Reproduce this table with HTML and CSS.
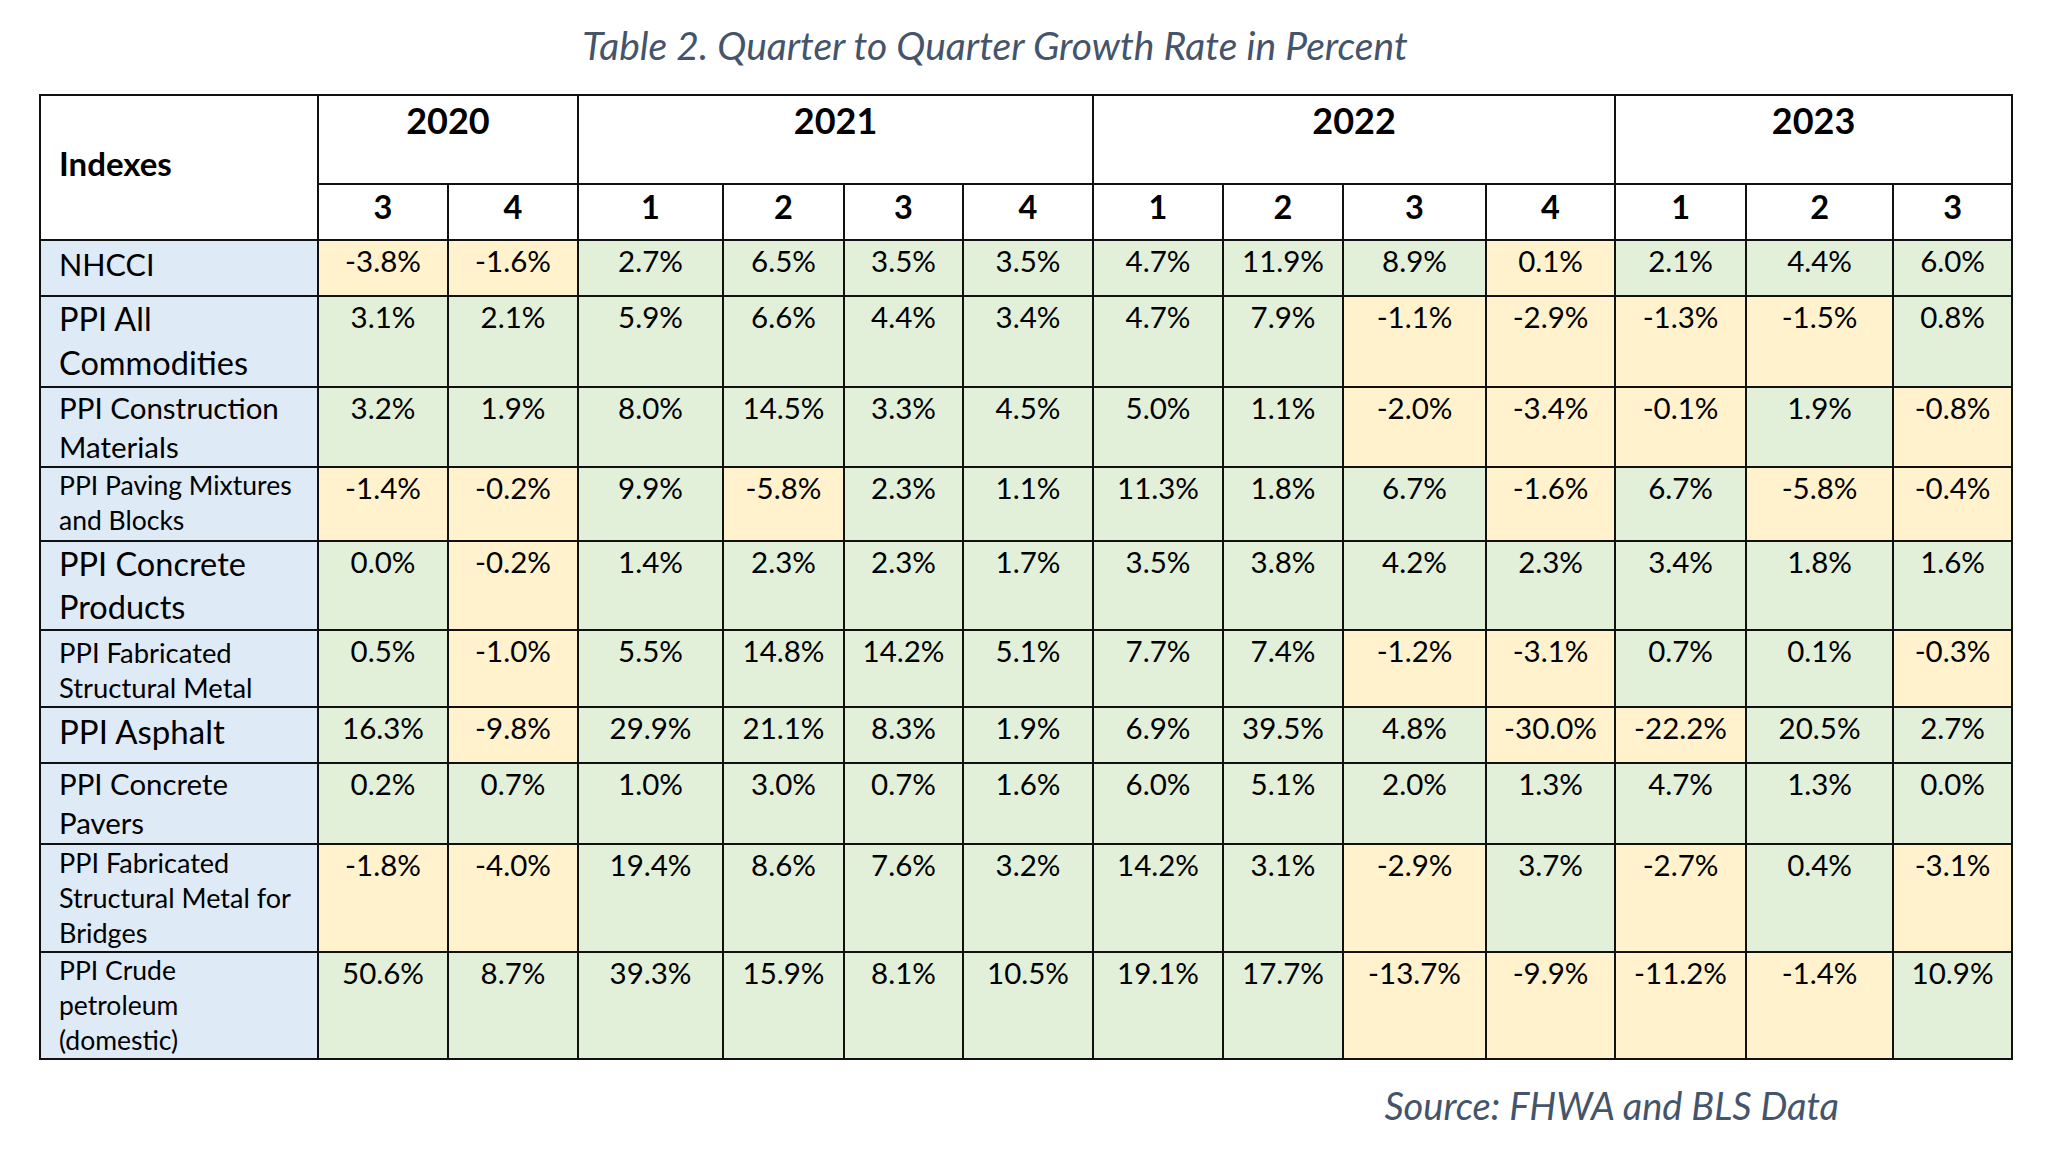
FILE: index.html
```html
<!DOCTYPE html>
<html lang="en">
<head>
<meta charset="utf-8">
<title>Table 2. Quarter to Quarter Growth Rate in Percent</title>
<link rel="stylesheet" href="styles.css">
</head>
<body>
<div class="page">
  <div class="title">Table 2. Quarter to Quarter Growth Rate in Percent</div>
  <table class="growth">
    <colgroup>
      <col class="c-label">
      <col class="c130"><col class="c130">
      <col class="c145"><col class="c121"><col class="c119"><col class="c130">
      <col class="c130"><col class="c120"><col class="c143"><col class="c129">
      <col class="c131"><col class="c147"><col class="c119">
    </colgroup>
    <thead>
      <tr class="h-year">
        <th class="idx" rowspan="2">Indexes</th>
        <th colspan="2">2020</th>
        <th colspan="4">2021</th>
        <th colspan="4">2022</th>
        <th colspan="3">2023</th>
      </tr>
      <tr class="h-q">
        <th>3</th><th>4</th>
        <th>1</th><th>2</th><th>3</th><th>4</th>
        <th>1</th><th>2</th><th>3</th><th>4</th>
        <th>1</th><th>2</th><th>3</th>
      </tr>
    </thead>
    <tbody>
      <tr class="r-nhcci">
        <td class="lbl l-nhcci">NHCCI</td>
        <td class="neg">-3.8%</td><td class="neg">-1.6%</td>
        <td class="pos">2.7%</td><td class="pos">6.5%</td><td class="pos">3.5%</td><td class="pos">3.5%</td>
        <td class="pos">4.7%</td><td class="pos">11.9%</td><td class="pos">8.9%</td><td class="neg">0.1%</td>
        <td class="pos">2.1%</td><td class="pos">4.4%</td><td class="pos">6.0%</td>
      </tr>
      <tr class="r-all">
        <td class="lbl l-all">PPI All<br>Commodities</td>
        <td class="pos">3.1%</td><td class="pos">2.1%</td>
        <td class="pos">5.9%</td><td class="pos">6.6%</td><td class="pos">4.4%</td><td class="pos">3.4%</td>
        <td class="pos">4.7%</td><td class="pos">7.9%</td><td class="neg">-1.1%</td><td class="neg">-2.9%</td>
        <td class="neg">-1.3%</td><td class="neg">-1.5%</td><td class="pos">0.8%</td>
      </tr>
      <tr class="r-cons">
        <td class="lbl l-cons">PPI Construction<br>Materials</td>
        <td class="pos">3.2%</td><td class="pos">1.9%</td>
        <td class="pos">8.0%</td><td class="pos">14.5%</td><td class="pos">3.3%</td><td class="pos">4.5%</td>
        <td class="pos">5.0%</td><td class="pos">1.1%</td><td class="neg">-2.0%</td><td class="neg">-3.4%</td>
        <td class="neg">-0.1%</td><td class="pos">1.9%</td><td class="neg">-0.8%</td>
      </tr>
      <tr class="r-pav">
        <td class="lbl l-pav">PPI Paving Mixtures<br>and Blocks</td>
        <td class="neg">-1.4%</td><td class="neg">-0.2%</td>
        <td class="pos">9.9%</td><td class="neg">-5.8%</td><td class="pos">2.3%</td><td class="pos">1.1%</td>
        <td class="pos">11.3%</td><td class="pos">1.8%</td><td class="pos">6.7%</td><td class="neg">-1.6%</td>
        <td class="pos">6.7%</td><td class="neg">-5.8%</td><td class="neg">-0.4%</td>
      </tr>
      <tr class="r-conc">
        <td class="lbl l-conc">PPI Concrete<br>Products</td>
        <td class="pos">0.0%</td><td class="neg">-0.2%</td>
        <td class="pos">1.4%</td><td class="pos">2.3%</td><td class="pos">2.3%</td><td class="pos">1.7%</td>
        <td class="pos">3.5%</td><td class="pos">3.8%</td><td class="pos">4.2%</td><td class="pos">2.3%</td>
        <td class="pos">3.4%</td><td class="pos">1.8%</td><td class="pos">1.6%</td>
      </tr>
      <tr class="r-fab">
        <td class="lbl l-fab">PPI Fabricated<br>Structural Metal</td>
        <td class="pos">0.5%</td><td class="neg">-1.0%</td>
        <td class="pos">5.5%</td><td class="pos">14.8%</td><td class="pos">14.2%</td><td class="pos">5.1%</td>
        <td class="pos">7.7%</td><td class="pos">7.4%</td><td class="neg">-1.2%</td><td class="neg">-3.1%</td>
        <td class="pos">0.7%</td><td class="pos">0.1%</td><td class="neg">-0.3%</td>
      </tr>
      <tr class="r-asp">
        <td class="lbl l-asp">PPI Asphalt</td>
        <td class="pos">16.3%</td><td class="neg">-9.8%</td>
        <td class="pos">29.9%</td><td class="pos">21.1%</td><td class="pos">8.3%</td><td class="pos">1.9%</td>
        <td class="pos">6.9%</td><td class="pos">39.5%</td><td class="pos">4.8%</td><td class="neg">-30.0%</td>
        <td class="neg">-22.2%</td><td class="pos">20.5%</td><td class="pos">2.7%</td>
      </tr>
      <tr class="r-pvr">
        <td class="lbl l-pvr">PPI Concrete<br>Pavers</td>
        <td class="pos">0.2%</td><td class="pos">0.7%</td>
        <td class="pos">1.0%</td><td class="pos">3.0%</td><td class="pos">0.7%</td><td class="pos">1.6%</td>
        <td class="pos">6.0%</td><td class="pos">5.1%</td><td class="pos">2.0%</td><td class="pos">1.3%</td>
        <td class="pos">4.7%</td><td class="pos">1.3%</td><td class="pos">0.0%</td>
      </tr>
      <tr class="r-brg">
        <td class="lbl l-brg">PPI Fabricated<br>Structural Metal for<br>Bridges</td>
        <td class="neg">-1.8%</td><td class="neg">-4.0%</td>
        <td class="pos">19.4%</td><td class="pos">8.6%</td><td class="pos">7.6%</td><td class="pos">3.2%</td>
        <td class="pos">14.2%</td><td class="pos">3.1%</td><td class="neg">-2.9%</td><td class="pos">3.7%</td>
        <td class="neg">-2.7%</td><td class="pos">0.4%</td><td class="neg">-3.1%</td>
      </tr>
      <tr class="r-crd">
        <td class="lbl l-crd">PPI Crude<br>petroleum<br>(domestic)</td>
        <td class="pos">50.6%</td><td class="pos">8.7%</td>
        <td class="pos">39.3%</td><td class="pos">15.9%</td><td class="pos">8.1%</td><td class="pos">10.5%</td>
        <td class="pos">19.1%</td><td class="pos">17.7%</td><td class="neg">-13.7%</td><td class="neg">-9.9%</td>
        <td class="neg">-11.2%</td><td class="neg">-1.4%</td><td class="pos">10.9%</td>
      </tr>
    </tbody>
  </table>
  <div class="source">Source: FHWA and BLS Data</div>
</div>
</body>
</html>
```

FILE: styles.css
```css
html, body {
  margin: 0;
  padding: 0;
  background: #ffffff;
}

.page {
  width: 2048px;
  font-family: Lato, "Open Sans", "Liberation Sans", sans-serif;
  color: #000;
}

.title {
  padding: 20px 58px 24px 0;
  line-height: 50px;
  font-size: 39px;
  font-style: italic;
  color: #44546a;
  text-align: center;
}

.growth {
  margin-left: 39px;
  width: 1972px;
  table-layout: fixed;
  border-collapse: collapse;
  border: 2px solid #111;
}

.c-label { width: 278px; }
.c119 { width: 119px; }
.c120 { width: 120px; }
.c121 { width: 121px; }
.c129 { width: 129px; }
.c130 { width: 130px; }
.c131 { width: 131px; }
.c143 { width: 143px; }
.c145 { width: 145px; }
.c147 { width: 147px; }

.growth th,
.growth td {
  border: 2px solid #111;
  vertical-align: top;
  text-align: center;
  padding: 2px 2px 0;
  font-size: 29.5px;
  line-height: 36px;
}

.growth th {
  font-weight: 700;
  background: #fff;
}

.h-year { height: 89px; }
.h-year th {
  font-size: 36px;
  line-height: 44px;
  padding-top: 2px;
}

.h-q { height: 56px; }
.h-q th {
  font-size: 32.5px;
  line-height: 40px;
  padding-top: 2px;
}

.growth th.idx {
  vertical-align: middle;
  text-align: left;
  padding: 0 4px 10px 18px;
  font-size: 33px;
  line-height: 40px;
}

.pos { background: #e2efd9; }
.neg { background: #fff2cc; }

.growth td.lbl {
  background: #deeaf6;
  text-align: left;
  padding-left: 18px;
  padding-right: 2px;
  white-space: nowrap;
}

.r-nhcci { height: 56px; }
.r-all { height: 91px; }
.r-cons { height: 79px; }
.r-pav { height: 74px; }
.r-conc { height: 89px; }
.r-fab { height: 77px; }
.r-asp { height: 56px; }
.r-pvr { height: 81px; }
.r-brg { height: 108px; }
.r-crd { height: 107px; }

.growth td.l-nhcci { font-size: 30.5px; line-height: 40px; padding-top: 3px; }
.growth td.l-all { font-size: 32.5px; line-height: 44px; padding-top: 0; }
.growth td.l-cons { font-size: 29.5px; line-height: 39px; padding-top: 0; }
.growth td.l-pav { font-size: 26.5px; line-height: 35px; padding-top: 0; }
.growth td.l-conc { font-size: 32.5px; line-height: 43px; padding-top: 0; }
.growth td.l-fab { font-size: 27.4px; line-height: 35px; padding-top: 4px; }
.growth td.l-asp { font-size: 33px; line-height: 40px; padding-top: 3px; }
.growth td.l-pvr { font-size: 29.4px; line-height: 39px; padding-top: 0; }
.growth td.l-brg { font-size: 27px; line-height: 35px; padding-top: 0; }
.growth td.l-crd { font-size: 26.5px; line-height: 35px; padding-top: 0; }

.source {
  padding: 20px 209px 0 0;
  line-height: 50px;
  font-size: 38px;
  font-style: italic;
  color: #44546a;
  text-align: right;
}
```
